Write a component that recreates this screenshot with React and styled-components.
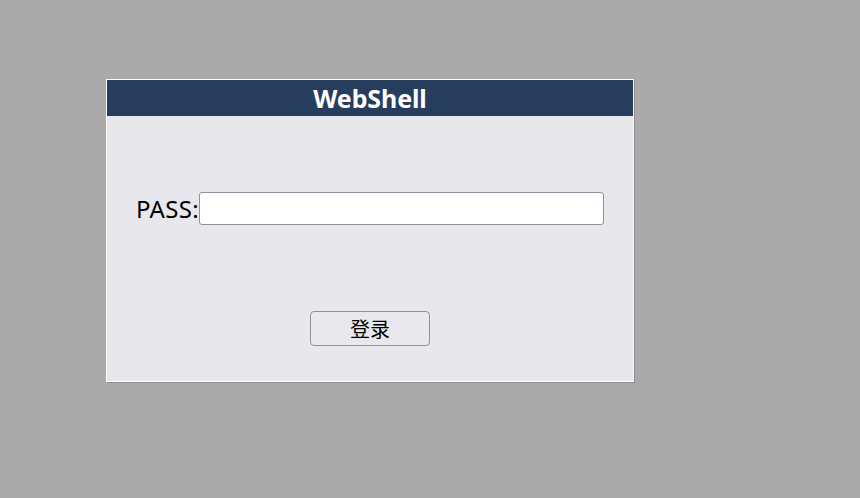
import React from "react";
import styled, { createGlobalStyle } from "styled-components";

const Global = createGlobalStyle`
  html, body { margin: 0; padding: 0; background: #aaaaaa; }
  body { font-family: "Noto Sans", "Open Sans", "Noto Sans CJK SC", sans-serif; }
`;

const Page = styled.div`
  width: 860px;
  height: 498px;
  padding: 79px 0 0 106px;
  box-sizing: border-box;
`;

const Panel = styled.div`
  width: 526px;
  height: 301px;
  border: 1px solid #ffffff;
  border-right-color: #f4f4f4;
  box-shadow: 1px 1px 0 #8e8e8e;
  background: #e8e7ec;
  display: flex;
  flex-direction: column;
`;

const Header = styled.div`
  height: 36px;
  background: #273d5e;
  color: #ffffff;
  font-weight: 700;
  font-size: 25px;
  line-height: 36px;
  text-align: center;
  letter-spacing: -0.1px;
`;

const Body = styled.div`
  flex: 1;
  display: flex;
  flex-direction: column;
  align-items: center;
`;

const Row = styled.div`
  margin-top: 76px;
  display: flex;
  align-items: center;
  width: 100%;
  padding-left: 29px;
  box-sizing: border-box;
`;

const Label = styled.span`
  font-size: 24px;
  line-height: 33px;
  color: #000;
  letter-spacing: 0.3px;
`;

const Input = styled.input`
  width: 405px;
  height: 33px;
  box-sizing: border-box;
  border: 1px solid #8f8f9d;
  border-radius: 3px;
  background: #fff;
  margin-left: 0;
  padding: 0 4px;
  font-size: 16px;
`;

const Button = styled.button`
  margin-top: 86px;
  width: 120px;
  height: 35px;
  box-sizing: border-box;
  border: 1px solid #8f8f9d;
  border-radius: 4px;
  background: #e9e9ed;
  font-family: "Noto Sans CJK SC", sans-serif;
  font-size: 20px;
  line-height: 33px;
  color: #000;
  padding: 0;
  cursor: pointer;
`;

export default function App() {
  return (
    <>
      <Global />
      <Page>
        <Panel>
          <Header>WebShell</Header>
          <Body>
            <Row>
              <Label>PASS:</Label>
              <Input type="password" />
            </Row>
            <Button>登录</Button>
          </Body>
        </Panel>
      </Page>
    </>
  );
}
